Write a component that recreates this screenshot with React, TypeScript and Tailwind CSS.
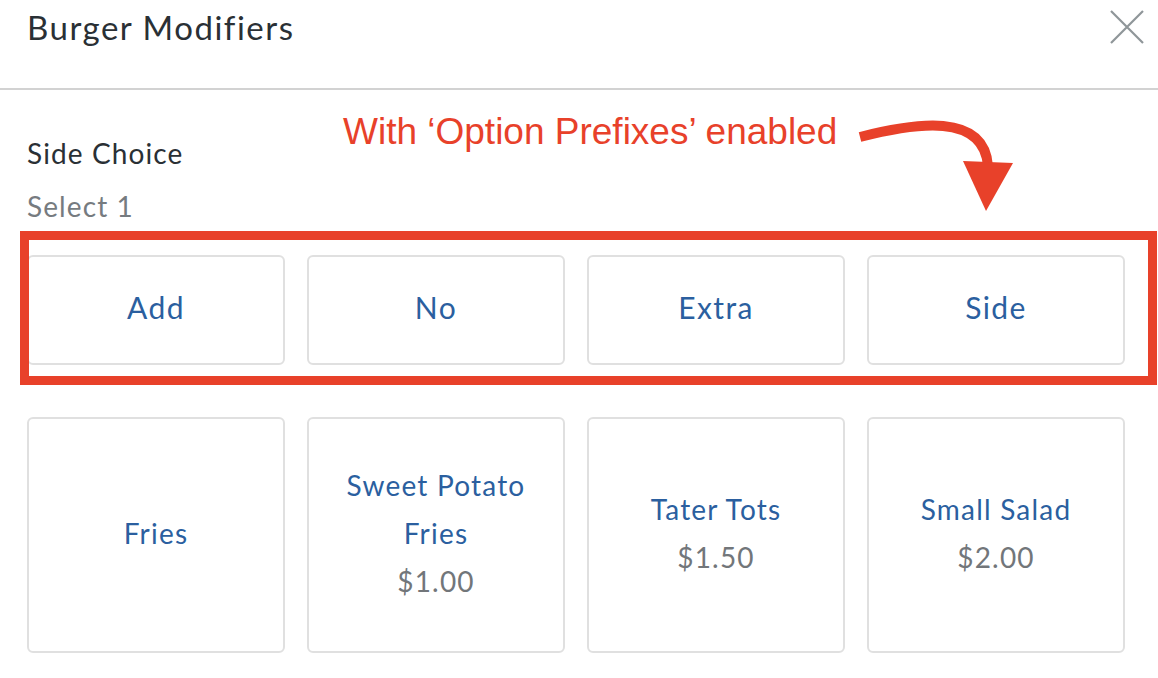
const prefixes = ['Add', 'No', 'Extra', 'Side'];

const sides = [
  { name: 'Fries', price: null },
  { name: 'Sweet Potato Fries', price: '$1.00' },
  { name: 'Tater Tots', price: '$1.50' },
  { name: 'Small Salad', price: '$2.00' },
];

export default function App() {
  return (
    <div className="relative h-[678px] w-[1158px] overflow-hidden bg-white font-['Lato',sans-serif]">
      {/* Header */}
      <div className="flex h-[90px] items-start justify-between border-b-2 border-[#d2d2d2] pl-[27px] pr-[14px]">
        <h1 className="mt-[7px] text-[33px] leading-[40px] tracking-[1.5px] text-[#2a3035]">Burger Modifiers</h1>
        <svg className="mt-[10px]" width="34" height="34" viewBox="0 0 34 34">
          <path d="M1 1 L33 33 M33 1 L1 33" stroke="#8f9699" strokeWidth="2.2" />
        </svg>
      </div>

      {/* Body */}
      <div className="flex flex-col pl-[27px] pr-[33px]">
        <div className="mt-[47px] text-[28px] leading-[32px] tracking-[1.1px] text-[#2a3035]">Side Choice</div>
        <div className="mt-[21px] text-[28px] leading-[32px] tracking-[1.1px] text-[#767b80]">Select 1</div>

        <div className="mt-[33px] grid grid-cols-4 gap-[22px]">
          {prefixes.map((p) => (
            <div
              key={p}
              className="flex h-[110px] items-center justify-center rounded-[6px] border-2 border-[#e0e0e0] pb-[6px] text-[30px] tracking-[1.4px] text-[#2b5f9f]"
            >
              {p}
            </div>
          ))}
        </div>

        <div className="mt-[52px] grid grid-cols-4 gap-[22px]">
          {sides.map((s) => (
            <div
              key={s.name}
              className="flex h-[236px] flex-col items-center justify-center rounded-[6px] border-2 border-[#e0e0e0] px-6 pb-[5px] text-center text-[28px] leading-[48px] tracking-[1.2px]"
            >
              <span className="text-[#2b5f9f]">{s.name}</span>
              {s.price && <span className="text-[#72767a]">{s.price}</span>}
            </div>
          ))}
        </div>
      </div>

      {/* Annotation overlay */}
      <div className="pointer-events-none absolute left-[20px] top-[231px] h-[154px] w-[1137px] border-[9px] border-[#e8412a]" />
      <div className="absolute left-[343px] top-[110px] font-['Liberation_Sans',sans-serif] text-[37px] leading-[44px] text-[#e8412a]">
        With ‘Option Prefixes’ enabled
      </div>
      <svg className="absolute left-0 top-0" width="1158" height="678" viewBox="0 0 1158 678">
        <path d="M860 137 C 915 123, 984 112, 988 166" fill="none" stroke="#e8412a" strokeWidth="10" />
        <path d="M963 161 L1013 163 L986 211 Z" fill="#e8412a" />
      </svg>
    </div>
  );
}
